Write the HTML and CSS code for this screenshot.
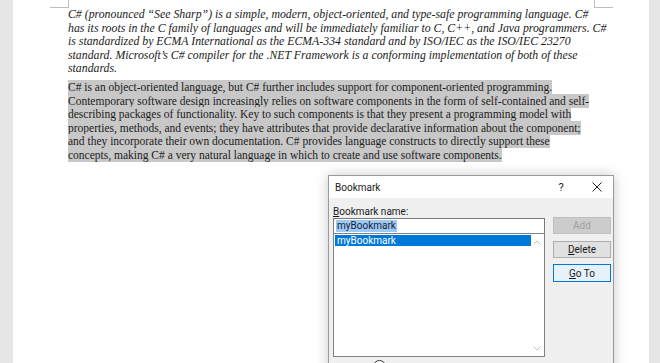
FILE: index.html
```html
<!DOCTYPE html>
<html>
<head>
<meta charset="utf-8">
<link rel="stylesheet" href="styles.css">
</head>
<body>
<div class="page">
  <div class="mark mark-left"></div>
  <div class="mark mark-right"></div>
  <div class="doc">
    <p class="p1">C# (pronounced “See Sharp”) is a simple, modern, object-oriented, and type-safe programming language. C#<br>has its roots in the C family of languages and will be immediately familiar to C, C++, and Java programmers. C#<br>is standardized by ECMA International as the ECMA-334 standard and by ISO/IEC as the ISO/IEC 23270<br>standard. Microsoft’s C# compiler for the .NET Framework is a conforming implementation of both of these<br>standards.</p>
    <p class="p2"><span class="hl">C# is an object-oriented language, but C# further includes support for component-oriented programming. <br>Contemporary software design increasingly relies on software components in the form of self-contained and self-<br>describing packages of functionality. Key to such components is that they present a programming model with<br>properties, methods, and events; they have attributes that provide declarative information about the component;<br>and they incorporate their own documentation. C# provides language constructs to directly support these<br>concepts, making C# a very natural language in which to create and use software components.</span></p>
  </div>
</div>

<div class="dialog">
  <div class="titlebar">
    <span class="title">Bookmark</span>
    <span class="help">?</span>
    <svg class="close" width="10" height="10" viewBox="0 0 10 10"><path d="M0.5 0.5 L9.5 9.5 M9.5 0.5 L0.5 9.5" stroke="#222" stroke-width="1"/></svg>
  </div>
  <div class="body">
    <div class="left">
      <div class="label"><u>B</u>ookmark name:</div>
      <div class="input"><span class="sel">myBookmark</span></div>
      <div class="list">
        <div class="items">
          <div class="item active">myBookmark</div>
        </div>
        <div class="scroll">
          <svg width="8" height="5" viewBox="0 0 8 5"><path d="M0.5 4.5 L4 1 L7.5 4.5" fill="none" stroke="#c2c2c2" stroke-width="1"/></svg>
          <svg width="8" height="5" viewBox="0 0 8 5"><path d="M0.5 0.5 L4 4 L7.5 0.5" fill="none" stroke="#c2c2c2" stroke-width="1"/></svg>
        </div>
      </div>
      <div class="radio-row"><span class="radio"></span></div>
    </div>
    <div class="buttons">
      <div class="btn disabled">Add</div>
      <div class="btn delete"><u>D</u>elete</div>
      <div class="btn default"><u>G</u>o To</div>
    </div>
  </div>
</div>
</body>
</html>
```
FILE: styles.css
```css
html, body {
  margin: 0;
  padding: 0;
}
body {
  background: #e6e6e6;
  width: 660px;
  height: 363px;
  overflow: hidden;
  position: relative;
}
.page {
  position: relative;
  margin-left: 13px;
  width: 636px;
  height: 363px;
  background: #ffffff;
}
.mark {
  position: absolute;
  top: 0;
  width: 18px;
  height: 7px;
}
.mark-left {
  left: 37px;
  border-right: 1px solid #bdbdbd;
  border-bottom: 1px solid #bdbdbd;
}
.mark-right {
  left: 581px;
  border-left: 1px solid #bdbdbd;
  border-bottom: 1px solid #bdbdbd;
}
.doc {
  padding: 8px 0 0 55px;
  font-family: "Liberation Serif", "Times New Roman", serif;
  font-size: 11.8px;
  line-height: 13.6px;
  color: #1b1b1b;
  white-space: nowrap;
}
.doc p {
  margin: 0;
}
.p1 {
  font-style: italic;
}
.doc .p2 {
  margin-top: 5px;
  font-size: 11.5px;
}
.hl {
  background: #c8c8c8;
  padding: 1px 0;
}
.dialog {
  position: absolute;
  left: 328px;
  top: 175px;
  width: 286px;
  height: 200px;
  border: 1px solid #9a9a9a;
  box-sizing: border-box;
  background: #f0f0f0;
  box-shadow: 0 0 12px rgba(0, 0, 0, 0.22);
  font-family: Roboto, "Noto Sans", sans-serif;
  font-size: 10px;
  color: #1a1a1a;
}
.titlebar {
  height: 22px;
  background: #ffffff;
  display: flex;
  align-items: center;
  padding-left: 6px;
}
.title {
  flex: 1;
}
.help {
  width: 14px;
  font-size: 11px;
  margin-right: 24px;
  text-align: center;
}
.close {
  margin-right: 11px;
}
.body {
  display: flex;
  padding: 0 0 0 4px;
}
.left {
  width: 212px;
  padding-top: 7px;
}
.label {
  height: 13px;
  line-height: 13px;
}
.label u, .btn u {
  text-decoration: underline;
  text-underline-offset: 1px;
}
.input {
  height: 15px;
  border: 1px solid #7a7a7a;
  border-bottom: none;
  background: #fff;
  box-sizing: border-box;
  padding-left: 2px;
  display: flex;
  align-items: center;
}
.sel {
  background: #9ccaf2;
  color: #1a1a40;
  line-height: 12px;
  padding: 0 1px;
}
.list {
  height: 124px;
  border: 1px solid #828282;
  box-sizing: border-box;
  background: #fff;
  display: flex;
  padding: 1px;
}
.items {
  flex: 1;
}
.item {
  height: 11px;
  line-height: 11px;
  padding-left: 2px;
}
.item.active {
  background: #0078d7;
  color: #fff;
}
.scroll {
  width: 12px;
  display: flex;
  flex-direction: column;
  justify-content: space-between;
  align-items: center;
  padding: 5px 0 4px;
}
.scroll svg {
  display: block;
}
.radio-row {
  padding: 3px 0 0 40px;
}
.radio {
  display: block;
  width: 11px;
  height: 11px;
  border: 1px solid #333;
  border-radius: 50%;
  background: #fff;
}
.buttons {
  margin-left: 8px;
  padding-top: 19px;
  display: flex;
  flex-direction: column;
  gap: 6px;
  width: 58px;
}
.btn {
  height: 17px;
  box-sizing: border-box;
  border: 1px solid #adadad;
  background: #e1e1e1;
  display: flex;
  align-items: center;
  justify-content: center;
}
.btn.delete {
  margin-top: 1px;
}
.btn.disabled {
  color: #a0a0a0;
  background: #cccccc;
  border-color: #bfbfbf;
}
.btn.default {
  border-color: #0078d7;
  background: #e5f1fb;
  height: 18px;
}
```
